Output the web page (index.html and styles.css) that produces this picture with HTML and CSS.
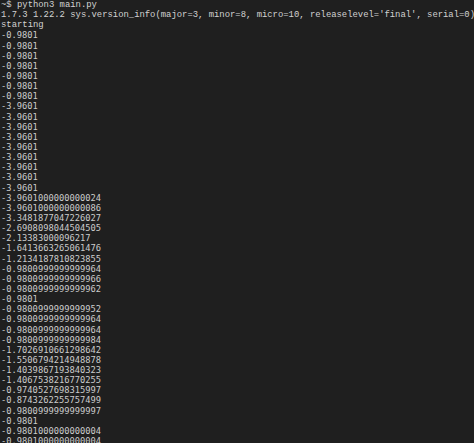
FILE: index.html
```html
<!DOCTYPE html>
<html>
<head>
<meta charset="utf-8">
<link rel="stylesheet" href="styles.css">
</head>
<body>
<div class="term">
<div class="line cmd">~$ python3 main.py</div>
<div class="line cmd">1.7.3 1.22.2 sys.version_info(major=3, minor=8, micro=10, releaselevel='final', serial=0)</div>
<div class="line cmd">starting</div>
<div class="line">-0.9801</div>
<div class="line">-0.9801</div>
<div class="line">-0.9801</div>
<div class="line">-0.9801</div>
<div class="line">-0.9801</div>
<div class="line">-0.9801</div>
<div class="line">-0.9801</div>
<div class="line">-3.9601</div>
<div class="line">-3.9601</div>
<div class="line">-3.9601</div>
<div class="line">-3.9601</div>
<div class="line">-3.9601</div>
<div class="line">-3.9601</div>
<div class="line">-3.9601</div>
<div class="line">-3.9601</div>
<div class="line">-3.9601</div>
<div class="line">-3.9601000000000024</div>
<div class="line">-3.9601000000000086</div>
<div class="line">-3.3481877047226027</div>
<div class="line">-2.6908098044504505</div>
<div class="line">-2.13383000096217</div>
<div class="line">-1.6413663265061476</div>
<div class="line">-1.2134187810823855</div>
<div class="line">-0.9800999999999964</div>
<div class="line">-0.9800999999999966</div>
<div class="line">-0.9800999999999962</div>
<div class="line">-0.9801</div>
<div class="line">-0.9800999999999952</div>
<div class="line">-0.9800999999999964</div>
<div class="line">-0.9800999999999964</div>
<div class="line">-0.9800999999999984</div>
<div class="line">-1.7026910661298642</div>
<div class="line">-1.5506794214948878</div>
<div class="line">-1.4039867193840323</div>
<div class="line">-1.4067538216770255</div>
<div class="line">-0.9740527698315997</div>
<div class="line">-0.8743262255757499</div>
<div class="line">-0.9800999999999997</div>
<div class="line">-0.9801</div>
<div class="line">-0.9801000000000004</div>
<div class="line">-0.9801000000000004</div>
</div>
</body>
</html>
```
FILE: styles.css
```css
html, body {
  margin: 0;
  padding: 0;
  background: #1f1f1f;
  height: 100%;
  overflow: hidden;
}
.term {
  display: flex;
  flex-direction: column;
  padding: 0 0 0 1px;
  color: #cccccc;
  font-family: "DejaVu Sans Mono", monospace;
  font-size: 8.75px;
  line-height: 10.15px;
  white-space: pre;
}
.line {
  height: 10.15px;
}
.cmd {
  font-family: "Liberation Mono", monospace;
  font-size: 8.9px;
  color: #d2d2d2;
}
```
